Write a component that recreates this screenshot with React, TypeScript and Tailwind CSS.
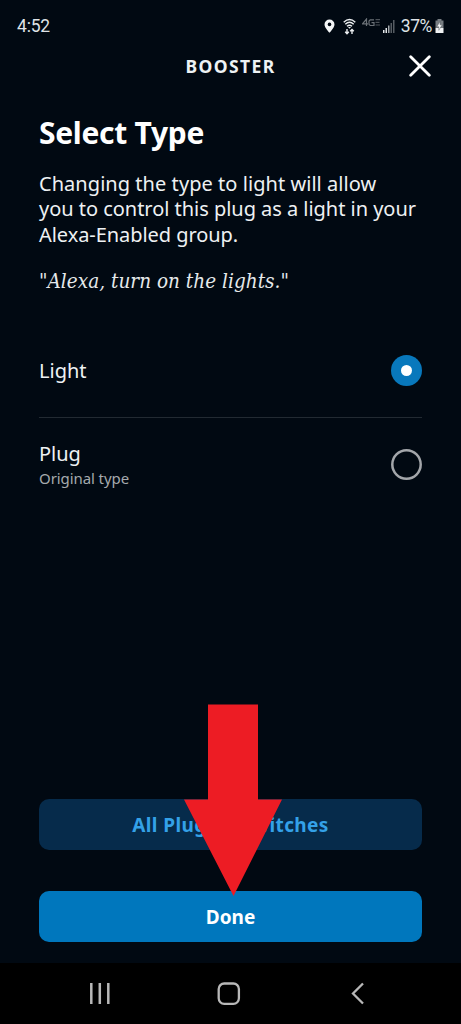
import type { ReactNode } from 'react';

function StatusBar() {
  return (
    <div className="flex h-[50px] shrink-0 items-center justify-between pl-[17px] pr-[17px] pt-[2px] font-['Roboto',sans-serif] text-[#dfe3e6]">
      <span className="text-[17.5px] tracking-[-0.2px]">4:52</span>
      <div className="flex items-center">
        <svg width="11" height="14" viewBox="0 0 11 14" className="mr-[8px]">
          <path d="M5.5 0.5a5 5 0 0 0-5 5c0 3.4 5 8.2 5 8.2s5-4.800 5-8.200a5 5 0 0 0-5-5z" fill="#f4f6f7" />
          <circle cx="5.5" cy="5.400" r="1.800" fill="#010912" />
        </svg>
        <svg width="13" height="17" viewBox="0 0 13 17" className="mr-[6px]" fill="none" stroke="#eceff1" strokeWidth="1.400">
          <path d="M0.700 4.200q5.800-5.400 11.600 0M2.300 6.300q4.200-3.900 8.400 0M4 8.300q2.500-2.200 5 0" />
          <path d="M5 9h3L6.500 10.800z" fill="#eceff1" stroke="none" />
          <path d="M4 11v4.500M2.200 13.800L4 15.700l1.800-1.900M9 16v-4.500M7.200 13.300L9 11.400l1.800 1.900" />
        </svg>
        <svg width="18" height="10" viewBox="0 0 18 10" className="mb-[6px] mr-[3px]" fill="none" stroke="#6b7177" strokeWidth="1.200">
          <path d="M4.500 8V1L0.500 5.800h5.500M12 1.800H8.200L7 3v3.300L8.200 7.500H12V4.700H9.500" />
          <path d="M13.500 1.600H18M13.500 4.300H17.500M13.500 7H18" stroke="#4c5258" />
        </svg>
        <svg width="12" height="13" viewBox="0 0 12 13" className="mr-[6px]">
          <path d="M0 10h1.500v3H0zM2.500 8H4v5H2.500z" fill="#e3e6e8" />
          <path d="M5 5.500h1.500V13H5z" fill="#a4a9ad" />
          <path d="M7.500 3H9v10H7.500zM10 0h1.500v13H10z" fill="#565c62" />
        </svg>
        <span className="text-[17.5px] tracking-[-0.4px]">37%</span>
        <svg width="9" height="14" viewBox="0 0 9 14" className="ml-[3px]">
          <path d="M2.500 0h4v1.500H8.500V9H0.500V1.500h2z" fill="#777d82" />
          <path d="M0.500 9h8v5h-8z" fill="#f0f2f3" />
          <path d="M5 2.500L1.800 7.800h2v3.500l3.400-5.500H5z" fill="#f0f2f3" stroke="#4a5056" strokeWidth=".4" />
        </svg>
      </div>
    </div>
  );
}

function Header() {
  return (
    <header className="relative flex h-[32px] shrink-0 items-center justify-center">
      <h1 className="text-[17.5px] font-bold tracking-[1.4px] text-[#eef2f4]">BOOSTER</h1>
      <button aria-label="Close" className="absolute right-[30px] top-[5px]">
        <svg width="22" height="22" viewBox="0 0 22 22" fill="none" stroke="#fff" strokeWidth="2.800" strokeLinecap="round">
          <path d="M1.700 1.700l18.600 18.600M20.300 1.700L1.700 20.300" />
        </svg>
      </button>
    </header>
  );
}

function Option({ children, selected }: { children: ReactNode; selected?: boolean }) {
  return (
    <div className="flex h-[93px] items-center justify-between">
      <div className="pt-[2px]">{children}</div>
      {selected ? (
        <span className="flex size-[31px] items-center justify-center rounded-full bg-[#0878bc]">
          <span className="size-[11px] rounded-full bg-white" />
        </span>
      ) : (
        <svg width="31" height="31" viewBox="0 0 31 31">
          <circle cx="15.500" cy="15.500" r="14.200" fill="none" stroke="#a3a6aa" strokeWidth="2.500" />
        </svg>
      )}
    </div>
  );
}

export default function App() {
  return (
    <div className="flex h-[1024px] w-[461px] flex-col overflow-hidden bg-[#010912] font-['Noto_Sans',sans-serif]">
      <StatusBar />
      <Header />
      <main className="relative flex flex-1 flex-col px-[39px] pt-[31px]">
        <h2 className="whitespace-nowrap text-[30px] font-bold leading-[40px] tracking-[-0.3px] text-white">Select Type</h2>
        <p className="mt-[18px] whitespace-nowrap text-[20px] font-[450] leading-[25.300px] text-[#eef1f3]">
          <span className="block tracking-[0.05px]">Changing the type to light will allow</span>
          <span className="block tracking-[-0.03px]">you to control this plug as a light in your</span>
          <span className="block tracking-[-0.06px]">Alexa-Enabled group.</span>
        </p>
        <p className="mt-[19px] whitespace-nowrap font-['DejaVu_Serif_Condensed','DejaVu_Serif',serif] text-[20.500px] italic leading-[30px] tracking-[0.03px] text-[#e6e9eb]">"Alexa, turn on the lights."</p>
        <section className="mt-[28px]">
          <Option selected>
            <div className="text-[20px] leading-[26px] text-[#eef1f3]">Light</div>
          </Option>
          <div className="h-px bg-[#222a32]" />
          <Option>
            <div className="text-[20px] leading-[26px] text-[#eef1f3]">Plug</div>
            <div className="text-[15px] leading-[22px] tracking-[-0.080px] text-[#a5a9ad]">Original type</div>
          </Option>
        </section>
        <div className="mb-[21px] mt-auto flex flex-col gap-[41px]">
          <button className="h-[51px] rounded-[10px] bg-[#062b4b] pt-px text-[19px] font-bold tracking-[0.4px] text-[#34a1e8]">All Plugs &amp; Switches</button>
          <button className="h-[51px] rounded-[10px] bg-[#0077bd] pt-px text-[19px] font-bold text-white">Done</button>
        </div>
        <svg className="absolute left-[184px] top-[622px]" width="98" height="192" viewBox="0 0 98 192">
          <path d="M24 0.500h50V95.500h24L49.500 192L0 95.500h24z" fill="#ed1c24" />
        </svg>
      </main>
      <nav className="flex h-[61px] shrink-0 items-center bg-black">
        <svg width="461" height="61" viewBox="0 0 461 61" fill="none" stroke="#b8b8b8" strokeWidth="2.300">
          <path d="M91.300 20v21M99.800 20v21M108.300 20v21" strokeWidth="2.500" />
          <rect x="218.700" y="20.500" width="20.200" height="20.300" rx="5.500" />
          <path d="M363 20.500L353 30.500l10 10" />
        </svg>
      </nav>
    </div>
  );
}
